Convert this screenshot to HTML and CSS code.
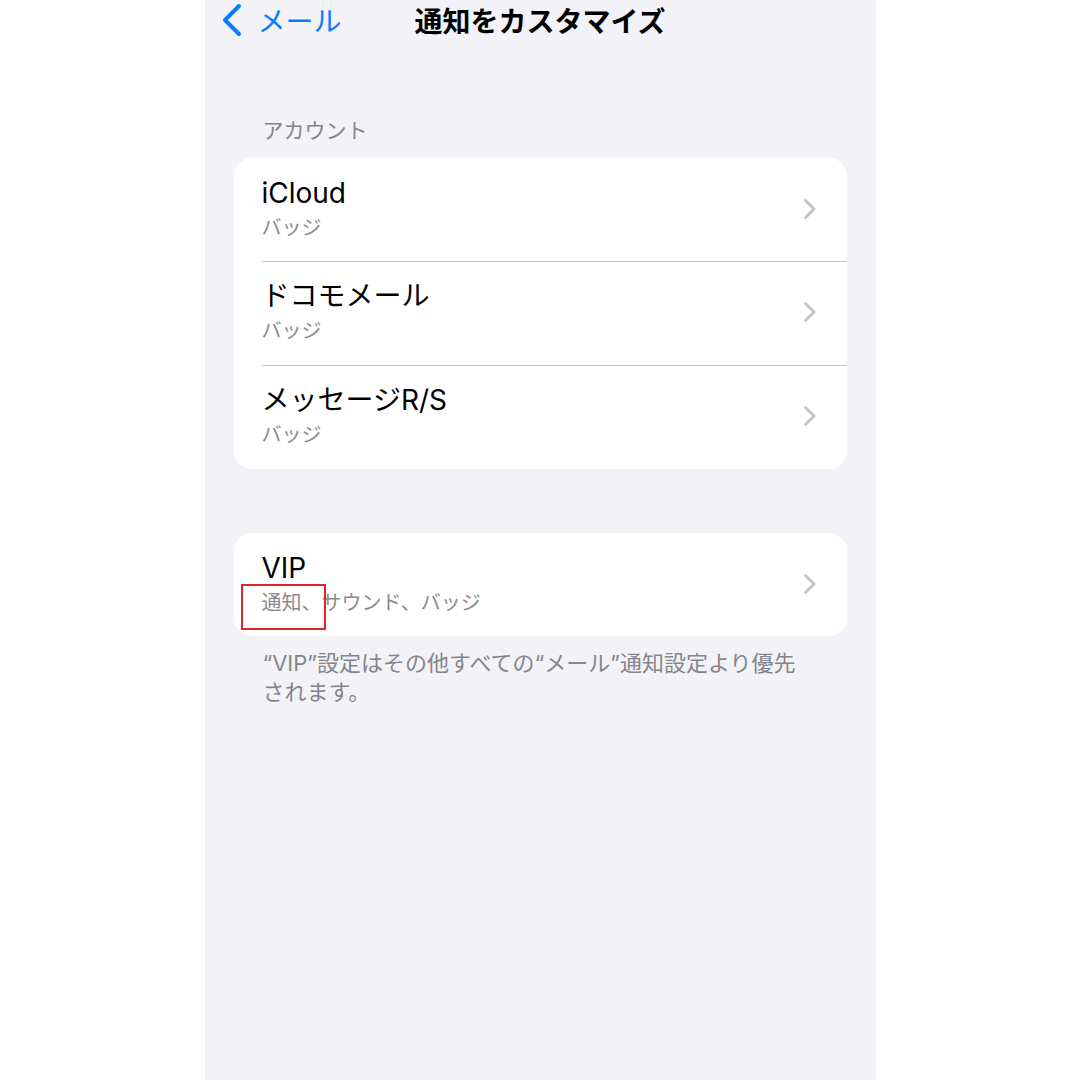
FILE: index.html
```html
<!DOCTYPE html>
<html lang="ja">
  <head>
    <meta charset="UTF-8" />
    <meta name="viewport" content="width=device-width, initial-scale=1.0" />
    <title>通知をカスタマイズ</title>
    <link rel="stylesheet" href="styles.css">
  </head>
  <body>
    <div class="screen">
      <header class="navbar">
        <a class="back" href="#">
          <svg class="back-icon" width="22" height="34" viewBox="0 0 22 34">
            <path d="M18 3 L4 17 L18 31" />
          </svg>
          <span>メール</span>
        </a>
        <h1 class="nav-title">通知をカスタマイズ</h1>
        <span></span>
      </header>

      <h2 class="section-title">アカウント</h2>
      <ul class="group">
        <li class="row">
          <div class="row-text">
            <div class="row-name">iCloud</div>
            <div class="row-detail">バッジ</div>
          </div>
          <svg class="chevron" width="14" height="22" viewBox="0 0 14 22">
            <path d="M2.5 2.5 L11 11 L2.5 19.5" />
          </svg>
        </li>
        <li class="row">
          <div class="row-text">
            <div class="row-name">ドコモメール</div>
            <div class="row-detail">バッジ</div>
          </div>
          <svg class="chevron" width="14" height="22" viewBox="0 0 14 22">
            <path d="M2.5 2.5 L11 11 L2.5 19.5" />
          </svg>
        </li>
        <li class="row">
          <div class="row-text">
            <div class="row-name">メッセージR/S</div>
            <div class="row-detail">バッジ</div>
          </div>
          <svg class="chevron" width="14" height="22" viewBox="0 0 14 22">
            <path d="M2.5 2.5 L11 11 L2.5 19.5" />
          </svg>
        </li>
      </ul>

      <ul class="group group-vip">
        <li class="row">
          <div class="row-text">
            <div class="row-name">VIP</div>
            <div class="row-detail">通知、サウンド、バッジ</div>
          </div>
          <svg class="chevron" width="14" height="22" viewBox="0 0 14 22">
            <path d="M2.5 2.5 L11 11 L2.5 19.5" />
          </svg>
          <span class="highlight"></span>
        </li>
      </ul>
      <p class="footnote">“VIP”設定はその他すべての“メール”通知設定より優先されます。</p>
    </div>
  </body>
</html>
```

FILE: styles.css
```css
body {
  margin: 0;
  background-color: #ffffff;
  font-family: Inter, "Noto Sans CJK JP", sans-serif;
}
.screen {
  width: 671px;
  height: 1080px;
  margin: 0 auto;
  background-color: #f2f2f7;
  overflow: hidden;
}
.navbar {
  display: grid;
  grid-template-columns: 1fr auto 1fr;
  align-items: center;
  height: 36px;
}
.back {
  display: flex;
  align-items: center;
  gap: 15px;
  padding-left: 16px;
  color: #0a7aff;
  font-size: 28px;
  text-decoration: none;
}
.back-icon path {
  fill: none;
  stroke: #0a7aff;
  stroke-width: 4;
  stroke-linecap: round;
  stroke-linejoin: round;
}
.nav-title {
  margin: 0;
  font-size: 28px;
  font-weight: 700;
  color: #000000;
}
.section-title {
  margin: 81px 0 13px;
  padding-left: 58px;
  font-size: 21px;
  font-weight: 400;
  line-height: 28px;
  color: #85858a;
}
.group {
  list-style: none;
  margin: 0 29px;
  padding: 0;
  background-color: #ffffff;
  border-radius: 18px;
}
.group-vip {
  margin-top: 64px;
}
.row {
  position: relative;
  display: flex;
  align-items: center;
  justify-content: space-between;
  box-sizing: border-box;
  height: 103px;
  padding: 0 30px 2px 28px;
}
.row + .row {
  height: 104px;
}
.row + .row::before {
  content: "";
  position: absolute;
  top: 0;
  left: 28px;
  right: 0;
  border-top: 1px solid #c6c6c8;
}
.row-text {
  display: flex;
  flex-direction: column;
  gap: 4px;
}
.row-name {
  font-size: 28px;
  line-height: 34px;
  color: #000000;
}
.row-detail {
  font-size: 20px;
  line-height: 28px;
  color: #8a8a8e;
}
.chevron path {
  fill: none;
  stroke: #c4c4c7;
  stroke-width: 3;
  stroke-linecap: round;
  stroke-linejoin: round;
}
.highlight {
  position: absolute;
  left: 7px;
  top: 51px;
  width: 85px;
  height: 46px;
  box-sizing: border-box;
  border: 2px solid #e0242a;
}
.footnote {
  margin: 13px 0 0;
  padding: 0 70px 0 58px;
  font-size: 22px;
  line-height: 29px;
  color: #85858a;
}
```
